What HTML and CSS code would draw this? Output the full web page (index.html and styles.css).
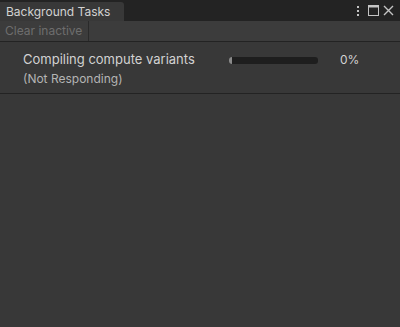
FILE: index.html
```html
<!DOCTYPE html>
<html>
<head>
<meta charset="utf-8">
<link rel="stylesheet" href="styles.css">
</head>
<body>
<div class="window">
  <div class="tabstrip">
    <div class="tab">Background Tasks</div>
    <div class="winicons">
      <svg class="kebab" width="4" height="12" viewBox="0 0 4 12"><rect x="1" y="1" width="2" height="2" fill="#c4c4c4"/><rect x="1" y="5" width="2" height="2" fill="#c4c4c4"/><rect x="1" y="9" width="2" height="2" fill="#c4c4c4"/></svg>
      <svg width="11" height="11" viewBox="0 0 11 11"><rect x="0.5" y="0.5" width="10" height="10" fill="none" stroke="#c4c4c4"/><rect x="0" y="0" width="11" height="2.5" fill="#c4c4c4"/></svg>
      <svg width="11" height="11" viewBox="0 0 11 11"><path d="M1 1L10 10M10 1L1 10" stroke="#c4c4c4" stroke-width="1.4"/></svg>
    </div>
  </div>
  <div class="toolbar">
    <div class="tbtn">Clear inactive</div>
  </div>
  <div class="task">
    <div class="info">
      <div class="name">Compiling compute variants</div>
      <div class="status">(Not Responding)</div>
    </div>
    <div class="bar"><div class="fill"></div></div>
    <div class="pct">0%</div>
  </div>
</div>
</body>
</html>
```
FILE: styles.css
```css
html, body { margin: 0; padding: 0; }
body {
  width: 400px; height: 327px; overflow: hidden;
  background: #383838;
  font-family: Inter, "Noto Sans", sans-serif;
}
.window { display: flex; flex-direction: column; height: 327px; }
.tabstrip {
  height: 21px; background: #232323;
  display: flex; align-items: flex-end; justify-content: space-between;
}
.tab {
  width: 118px; height: 19px; background: #383838;
  border-top-right-radius: 3px;
  color: #d2d2d2; font-size: 12px; line-height: 19px;
  padding-left: 6px;
}
.winicons { display: flex; align-items: center; gap: 4px; height: 21px; padding-right: 6px; }
.kebab { margin-right: 4px; }
.toolbar {
  height: 20px; background: #3c3c3c;
  border-bottom: 1px solid #232323;
  display: flex;
}
.tbtn {
  color: #6e6e6e; font-size: 12px; line-height: 20px;
  padding: 0 5px; border-right: 1px solid #2a2a2a;
  width: 78px;
}
.task {
  height: 51px; border-bottom: 1px solid #232323;
  display: flex; align-items: flex-start;
  padding-left: 23px;
}
.info { width: 206px; padding-top: 9px; }
.name { color: #d2d2d2; font-size: 13px; line-height: 16px; }
.status { color: #b4b4b4; font-size: 12px; line-height: 15px; margin-top: 4px; }
.bar {
  width: 89px; height: 7px; background: #1e1e1e; border-radius: 3px;
  margin-top: 15px; overflow: hidden;
}
.fill { width: 3px; height: 7px; background: #8a8a8a; }
.pct { color: #d2d2d2; font-size: 12px; margin-left: 22px; margin-top: 10px; line-height: 15px; }
```
